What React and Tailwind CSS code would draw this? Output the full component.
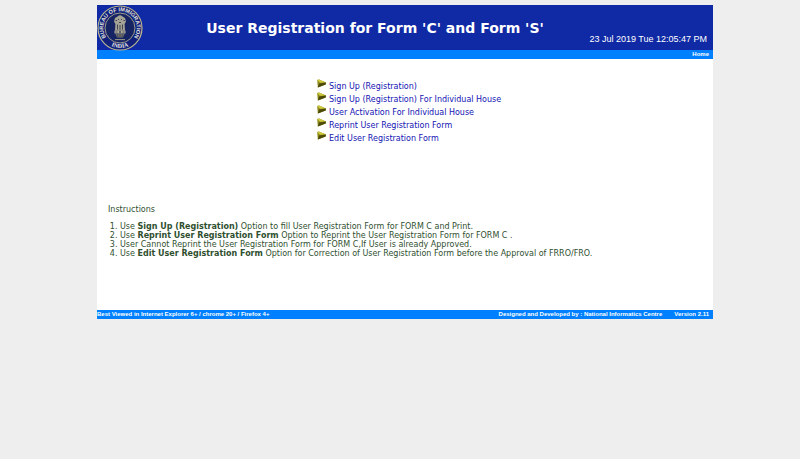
import React from 'react';

const links = [
  'Sign Up (Registration)',
  'Sign Up (Registration) For Individual House',
  'User Activation For Individual House',
  'Reprint User Registration Form',
  'Edit User Registration Form',
];

function Emblem() {
  return (
    <svg viewBox="0 0 46 46" className="w-[46px] h-[46px] shrink-0" role="img" aria-label="Bureau of Immigration India">
      <defs>
        <path id="ringTop" d="M 9.8 33.2 A 16.7 16.7 0 1 1 36.2 33.2" />
        <path id="ringBottom" d="M 8 36.6 A 21 21 0 0 0 38 36.6" />
      </defs>
      <circle cx="23" cy="23" r="22" fill="#10207c" stroke="#b9b691" strokeWidth="1.2" />
      <circle cx="23" cy="23" r="15" fill="#172463" stroke="#aaa98f" strokeWidth="0.9" />
      <text fontFamily="Liberation Sans, sans-serif" fontSize="5.5" fontWeight="bold" fill="#e4e4dc">
        <textPath href="#ringTop" startOffset="50%" textAnchor="middle">BUREAU OF IMMIGRATION</textPath>
      </text>
      <text fontFamily="Liberation Serif, serif" fontSize="6" fontWeight="bold" fill="#ecebe0">
        <textPath href="#ringBottom" startOffset="50%" textAnchor="middle">INDIA</textPath>
      </text>
      {/* lion capital */}
      <path d="M20.5 11.5 Q23 9 25.5 11.5 L28 13 L29 16.5 L27.6 19 L28 25.5 L18 25.5 L18.4 19 L17 16.5 L18 13 Z" fill="#a5a395" />
      <path d="M21 14.5h1M24 14.5h1M22 17.5h2M20.5 19.5v5M23 20v5M25.5 19.5v5M18.5 15.5h1.5M26.5 15.5h1.5" stroke="#35384a" strokeWidth="0.9" />
      <path d="M17.5 25.5h11v3h-11z" fill="#b3b09c" />
      <path d="M18.5 27h2M25.5 27h2" stroke="#454549" strokeWidth="0.9" />
      <circle cx="23" cy="27" r="1" fill="#454549" />
      <path d="M18.5 29h9l-1.5 3.6h-6z" fill="#73736c" />
      <path d="M20.8 29v3M23 29v3M25.2 29v3" stroke="#35384a" strokeWidth="0.7" />
      <path d="M18 34.6h10" stroke="#9b9a88" strokeWidth="1" />
    </svg>
  );
}

function Arrow() {
  return (
    <svg viewBox="0 0 9 9" className="w-[9px] h-[9px] shrink-0" aria-hidden="true">
      <path d="M0.2 1 L2 0.4 L9 3.6 L8.7 5.6 L0.8 8.6 Z" fill="#8f8b1a" />
      <path d="M0.2 1 L2 0.4 L9 3.6 L3 3.8 Z" fill="#cfca3e" />
      <path d="M2 4.6 L9 3.6 L8.7 5.6 L0.8 8.6 Z" fill="#4b4a0a" />
    </svg>
  );
}

export default function App() {
  return (
    <div className="min-h-screen bg-[#eeeeee] pt-[5px] pl-[97px] pr-[87px] font-['DejaVu_Sans',sans-serif]">
      <div className="bg-white">
        <header>
          <div className="flex h-[45px] bg-[#1029a5]">
            <Emblem />
            <h1 className="flex-1 pt-3 pl-6 text-center text-[14px] leading-[22px] font-bold text-white whitespace-nowrap">
              User Registration for Form 'C' and Form 'S'
            </h1>
            <time className="w-[130px] self-end pb-1 pr-[6px] text-right font-['Liberation_Sans',sans-serif] text-[9px] leading-[14px] text-white whitespace-nowrap">
              23 Jul 2019 Tue 12:05:47 PM
            </time>
          </div>
          <nav className="flex h-[9px] justify-end bg-[#0080ff] pr-1 font-['Liberation_Sans',sans-serif] text-[6px] leading-[9px] font-bold text-white">
            <a href="#home">Home</a>
          </nav>
        </header>

        <main className="h-[251px] pt-5 text-[8px]">
          <ul className="ml-[220px]">
            {links.map((label) => (
              <li key={label} className="flex h-[13px] gap-[3px]">
                <Arrow />
                <a href="#form" className="pt-px leading-[13px] text-[#1414b4] whitespace-nowrap">{label}</a>
              </li>
            ))}
          </ul>

          <section className="mt-[61px] pl-[11px] leading-[9px] text-[#2f4f2f]">
            <h2>Instructions</h2>
            <ol className="mt-2 list-decimal pl-3">
              <li>Use <b>Sign Up (Registration)</b> Option to fill User Registration Form for FORM C and Print.</li>
              <li>Use <b>Reprint User Registration Form</b> Option to Reprint the User Registration Form for FORM C .</li>
              <li>User Cannot Reprint the User Registration Form for FORM C,If User is already Approved.</li>
              <li>Use <b>Edit User Registration Form</b> Option for Correction of User Registration Form before the Approval of FRRO/FRO.</li>
            </ol>
          </section>
        </main>

        <footer className="flex h-[9px] bg-[#0080ff] pr-1 font-['Liberation_Sans',sans-serif] text-[6px] leading-[9px] font-bold text-white whitespace-nowrap">
          <span>Best Viewed in Internet Explorer 6+ / chrome 20+ / Firefox 4+</span>
          <span className="ml-auto">Designed and Developed by : National Informatics Centre</span>
          <span className="ml-3">Version 2.11</span>
        </footer>
      </div>
    </div>
  );
}
